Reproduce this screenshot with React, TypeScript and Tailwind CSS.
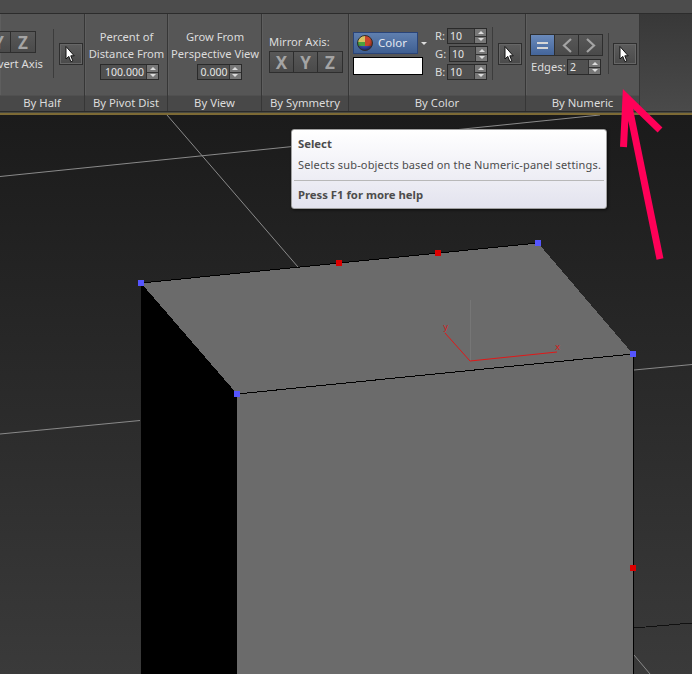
import React from 'react'

const Cursor: React.FC = () => (
    <svg width="10" height="17" viewBox="0 0 10 17" className="block">
        <path d="M1 0.5 L1 13 L3.8 10.4 L5.8 15.6 L7.8 14.8 L5.8 9.8 L9.2 9.8 Z" fill="#fff" stroke="#111" strokeWidth="1" />
    </svg>
)

const SelectBtn: React.FC = () => (
    <div className="flex h-[22px] w-[24px] shrink-0 items-center justify-center border border-[#2e2e2e] bg-gradient-to-b from-[#5c5c5c] to-[#4a4a4a] pr-[2px] shadow-[inset_0_0_0_1px_#666]">
        <Cursor />
    </div>
)

const Sep: React.FC<{ h: string }> = ({ h }) => <div className={`w-px shrink-0 bg-[#3c3c3c] ${h}`} />

const Arrows: React.FC = () => (
    <div className="flex h-full w-[12px] shrink-0 flex-col border-l border-[#333]">
        <div className="flex flex-1 items-center justify-center border-b border-[#333] bg-[#777]">
            <div className="h-0 w-0 border-x-[3px] border-b-[3px] border-x-transparent border-b-[#ddd]" />
        </div>
        <div className="flex flex-1 items-center justify-center bg-[#777]">
            <div className="h-0 w-0 border-x-[3px] border-t-[3px] border-x-transparent border-t-[#ddd]" />
        </div>
    </div>
)

const Spinner: React.FC<{ value: string; w: string; center?: boolean }> = ({ value, w, center }) => (
    <div className={`flex h-[16px] shrink-0 border border-[#2a2a2a] bg-[#505050] ${w}`}>
        <div className={`flex-1 pl-[2px] text-[10.5px] leading-[14px] text-[#e6e6e6] ${center ? 'text-center' : ''}`}>{value}</div>
        <Arrows />
    </div>
)

const AxisRow: React.FC<{ letters: string[] }> = ({ letters }) => (
    <div className="flex h-[22px] border border-[#2e2e2e]">
        {letters.map((l) => (
            <div key={l} className="flex w-[24px] items-center justify-center border-r border-[#2e2e2e] bg-gradient-to-b from-[#585858] to-[#4a4a4a] text-[17px] font-bold leading-none text-[#a4a4a4] last:border-r-0">
                {l}
            </div>
        ))}
    </div>
)

const Panel: React.FC<{ title: string; w: string; children: React.ReactNode }> = ({ title, w, children }) => (
    <div className={`flex h-full shrink-0 flex-col overflow-hidden border-r border-[#363636] ${w}`}>
        <div className="min-h-0 flex-1 border-l border-[#5e5e5e] bg-[#565656]">{children}</div>
        <div className="h-[16px] border-t border-[#505050] bg-[#484848] text-center text-[11.3px] leading-[14px] text-[#dcdcdc]">{title}</div>
    </div>
)

const Vertex: React.FC<{ x: number; y: number; c: string }> = ({ x, y, c }) => (
    <rect x={x - 3} y={y - 3} width="6" height="6" fill={c} />
)

const Scene: React.FC = () => (
    <svg viewBox="0 115 692 559" className="block h-full w-full">
        <g stroke="#8a8a8a" strokeWidth="1" fill="none">
            <line x1="0" y1="176.5" x2="600" y2="115" />
            <line x1="167" y1="115" x2="298" y2="267" />
            <line x1="0" y1="434" x2="140" y2="420.5" />
            <line x1="634" y1="370" x2="692" y2="364.5" />
            <line x1="634" y1="655" x2="650" y2="674" />
        </g>
        <line x1="634" y1="628" x2="692" y2="623" stroke="#111" strokeWidth="1" shapeRendering="crispEdges" />
        <polygon points="141,283 237,394 237,674 141,674" fill="#000" shapeRendering="crispEdges" />
        <polygon points="237,394 633,354 633,674 237,674" fill="#6b6b6b" shapeRendering="crispEdges" />
        <polygon points="141,283 538,243 633,354 237,394" fill="#6b6b6b" shapeRendering="crispEdges" />
        <line x1="141" y1="283" x2="538" y2="243" stroke="#000" strokeWidth="1" shapeRendering="crispEdges" />
        <line x1="237" y1="394" x2="633" y2="354" stroke="#000" strokeWidth="1" shapeRendering="crispEdges" />
        <line x1="633.5" y1="354" x2="633.5" y2="674" stroke="#000" strokeWidth="1" />
        <line x1="470.5" y1="300" x2="470.5" y2="361" stroke="#767676" strokeWidth="1" />
        <polyline points="445,333 470,361 557,352" fill="none" stroke="#e01818" strokeWidth="1" />
        <text x="443" y="330" fontSize="9" fill="#d02020" fontFamily="'DejaVu Sans', sans-serif">y</text>
        <text x="555" y="350" fontSize="9" fill="#d02020" fontFamily="'DejaVu Sans', sans-serif">x</text>
        <Vertex x={141} y={283} c="#5555ff" />
        <Vertex x={538} y={243} c="#5555ff" />
        <Vertex x={633} y={354} c="#5555ff" />
        <Vertex x={237} y={394} c="#5555ff" />
        <Vertex x={339} y={263} c="#dd0000" />
        <Vertex x={438} y={253} c="#dd0000" />
        <Vertex x={633} y={568} c="#dd0000" />
    </svg>
)

const ColorBall: React.FC = () => (
    <svg width="16" height="16" viewBox="0 0 16 16" className="shrink-0">
        <defs>
            <clipPath id="ball"><circle cx="8" cy="8" r="7.5" /></clipPath>
            <radialGradient id="shade" cx="0.45" cy="0.35" r="0.7">
                <stop offset="0.5" stopColor="#000" stopOpacity="0" />
                <stop offset="1" stopColor="#000" stopOpacity="0.65" />
            </radialGradient>
        </defs>
        <g clipPath="url(#ball)">
            <rect x="0" y="0" width="16" height="7" fill="#d8c060" />
            <rect x="8" y="0" width="8" height="16" fill="#c8452c" />
            <rect x="0" y="7" width="8" height="4" fill="#4ca040" />
            <rect x="0" y="11" width="16" height="5" fill="#3a48b0" />
            <rect x="0" y="0" width="16" height="16" fill="url(#shade)" />
        </g>
        <circle cx="8" cy="8" r="7.5" fill="none" stroke="#2e2e2e" />
    </svg>
)

const App: React.FC = () => {
    return (
        <div className="relative flex h-[674px] w-[692px] flex-col overflow-hidden bg-[#1c1c1c] [font-family:'Noto_Sans',sans-serif]">
            <div className="h-[14px] shrink-0 border-b border-[#2c2c2c] bg-[#4c4c4c]" />
            <div className="flex h-[97px] shrink-0 bg-gradient-to-b from-[#383838] to-[#4a4a4a]">
                <Panel title="By Half" w="w-[85px]">
                    <div className="flex h-full items-start justify-end pr-[1px]">
                        <div className="mt-[17px] flex w-[54px] shrink-0 flex-col items-end pr-[10px]">
                            <div className="mr-[7px] flex justify-end"><AxisRow letters={['Y', 'Z']} /></div>
                            <div className="mt-[3px] whitespace-nowrap text-[11.3px] leading-[16px] text-[#dcdcdc]">vert Axis</div>
                        </div>
                        <div className="mt-[15px]"><Sep h="h-[49px]" /></div>
                        <div className="ml-[5px] mt-[29px]"><SelectBtn /></div>
                    </div>
                </Panel>
                <Panel title="By Pivot Dist" w="w-[83px]">
                    <div className="flex flex-col items-center pt-[14px] text-center text-[11.2px] leading-[17px] text-[#dcdcdc]">
                        <div>Percent of</div>
                        <div className="whitespace-nowrap">Distance From</div>
                        <Spinner value="100.000" w="w-[59px] mt-[2px] ml-[6px]" />
                    </div>
                </Panel>
                <Panel title="By View" w="w-[94px]">
                    <div className="flex flex-col items-center pt-[14px] text-center text-[11.2px] leading-[17px] text-[#dcdcdc]">
                        <div>Grow From</div>
                        <div className="whitespace-nowrap">Perspective View</div>
                        <Spinner value="0.000" w="w-[45px] mt-[2px] ml-[8px]" center />
                    </div>
                </Panel>
                <Panel title="By Symmetry" w="w-[87px]">
                    <div className="flex flex-col items-start pl-[6px] pt-[19px]">
                        <div className="mb-[1px] text-[11.2px] leading-[17px] text-[#dcdcdc]">Mirror Axis:</div>
                        <AxisRow letters={['X', 'Y', 'Z']} />
                    </div>
                </Panel>
                <Panel title="By Color" w="w-[177px]">
                    <div className="flex items-start pl-[3px]">
                        <div className="mt-[18px] flex w-[70px] shrink-0 flex-col">
                            <div className="flex h-[22px] w-[65px] items-center gap-[5px] border border-[#2a4478] bg-gradient-to-b from-[#5f7faf] to-[#3f5f92] pl-[3px] text-[11.5px] text-[#e4e8f0]">
                                <ColorBall />
                                Color
                            </div>
                            <div className="mt-[3px] h-[18px] border border-black bg-white" />
                        </div>
                        <div className="ml-[-2px] mt-[28px] h-0 w-0 border-x-[3px] border-t-[3px] border-x-transparent border-t-[#ddd]" />
                        <div className="ml-[8px] mt-[14px] flex shrink-0 flex-col gap-[2px] text-[11.2px] leading-[16px] text-[#dcdcdc]">
                            <div className="flex items-center gap-[1px]"><span className="w-[11px]">R:</span><Spinner value="10" w="w-[40px]" /></div>
                            <div className="flex items-center gap-[1px]"><span className="w-[13px]">G:</span><Spinner value="10" w="w-[39px]" /></div>
                            <div className="flex items-center gap-[1px]"><span className="w-[11px]">B:</span><Spinner value="10" w="w-[40px]" /></div>
                        </div>
                        <div className="ml-[4px] mt-[13px]"><Sep h="h-[53px]" /></div>
                        <div className="ml-[5px] mt-[29px]"><SelectBtn /></div>
                    </div>
                </Panel>
                <Panel title="By Numeric" w="w-[114px]">
                    <div className="flex items-start pl-[3px]">
                        <div className="mt-[20px] flex w-[73px] shrink-0 flex-col">
                            <div className="flex h-[22px] border border-[#2e2e2e]">
                                <div className="flex w-[24px] flex-col items-center justify-center gap-[3px] border-r border-[#2e2e2e] bg-gradient-to-b from-[#6a8abb] to-[#44659a]">
                                    <div className="h-[2px] w-[11px] bg-[#d6d6d6]" />
                                    <div className="h-[2px] w-[11px] bg-[#d6d6d6]" />
                                </div>
                                <div className="flex w-[24px] items-center justify-center border-r border-[#2e2e2e] bg-gradient-to-b from-[#585858] to-[#4a4a4a]">
                                    <svg width="10" height="15" viewBox="0 0 10 15"><path d="M9 1 L2 7.5 L9 14" fill="none" stroke="#a4a4a4" strokeWidth="2.2" /></svg>
                                </div>
                                <div className="flex flex-1 items-center justify-center bg-gradient-to-b from-[#585858] to-[#4a4a4a]">
                                    <svg width="10" height="15" viewBox="0 0 10 15"><path d="M1 1 L8 7.5 L1 14" fill="none" stroke="#a4a4a4" strokeWidth="2.2" /></svg>
                                </div>
                            </div>
                            <div className="mt-[3px] flex items-center gap-[1px] pl-[1px] text-[11.2px] leading-[16px] text-[#dcdcdc]">
                                <span className="w-[35px]">Edges:</span>
                                <Spinner value="2" w="w-[34px]" />
                            </div>
                        </div>
                        <div className="ml-[5px] mt-[19px]"><Sep h="h-[41px]" /></div>
                        <div className="ml-[4px] mt-[29px]"><SelectBtn /></div>
                    </div>
                </Panel>
                <div className="min-w-0 flex-1" />
            </div>
            <div className="h-[1px] shrink-0 bg-[#2a2a2a]" />
            <div className="h-[1px] shrink-0 bg-[#4a4a40]" />
            <div className="h-[2px] shrink-0 bg-[#7d6a35]" />
            <div className="min-h-0 flex-1 bg-gradient-to-b from-[#1b1b1b] to-[#3a3a3a]">
                <Scene />
            </div>

            <div className="absolute left-[291px] top-[129px] flex h-[80px] w-[316px] flex-col rounded-[3px] border border-[#a0a0a0] bg-gradient-to-b from-white to-[#e3e3ee] px-[6px] text-[#4c4c4c] shadow-[1px_1px_3px_rgba(0,0,0,0.6)]">
                <div className="mt-[5px] text-[11.3px] font-bold leading-[18px]">Select</div>
                <div className="mt-[3px] whitespace-nowrap text-[11px] leading-[18px] tracking-[0.15px]">Selects sub-objects based on the Numeric-panel settings.</div>
                <div className="-mx-[4px] mt-[6px] h-px bg-[#b8b8b8]" />
                <div className="mt-[5px] text-[11.3px] font-bold leading-[18px]">Press F1 for more help</div>
            </div>

            <svg viewBox="0 0 692 674" className="pointer-events-none absolute left-0 top-0 h-[674px] w-[692px]">
                <path d="M660 259 L627 97 M623.5 147 L626 97 L660 130" fill="none" stroke="#ff0058" strokeWidth="7" />
            </svg>
        </div>
    )
}

export default App
